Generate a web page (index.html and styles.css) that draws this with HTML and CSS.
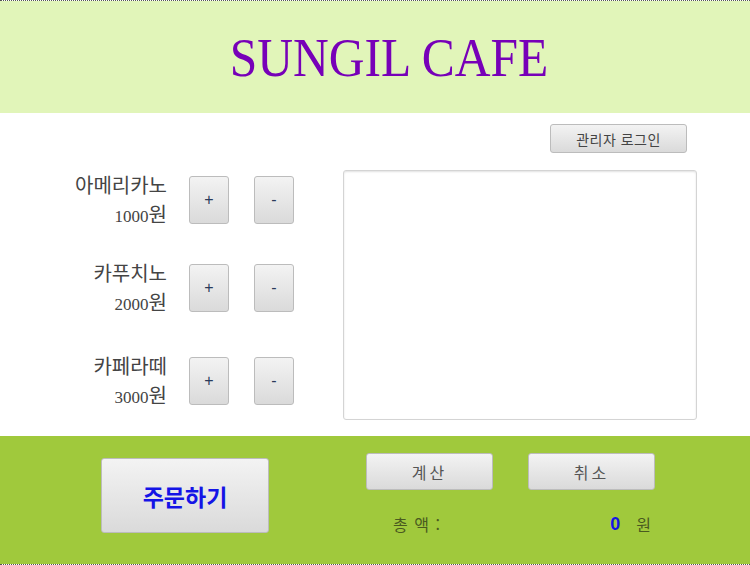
FILE: index.html
```html
<!DOCTYPE html>
<html lang="ko">
<head>
    <meta charset="UTF-8">
    <meta name="viewport" content="width=device-width, initial-scale=1.0">
    <title>Sungil Cafe</title>
    <link rel="stylesheet" href="styles.css">
</head>
<body>
    <div class="app">
        <div class="top">
            <h1 class="title">SUNGIL CAFE</h1>
        </div>

        <div class="middle">
            <div class="admin-row">
                <button class="btn admin">관리자 로그인</button>
            </div>
            <div class="content">
                <div class="menu">
                    <div class="item">
                        <div class="label">
                            <div class="name">아메리카노</div>
                            <div class="price"><span class="num">1000</span>원</div>
                        </div>
                        <button class="btn small plus">+</button>
                        <button class="btn small minus">-</button>
                    </div>
                    <div class="item">
                        <div class="label">
                            <div class="name">카푸치노</div>
                            <div class="price"><span class="num">2000</span>원</div>
                        </div>
                        <button class="btn small plus">+</button>
                        <button class="btn small minus">-</button>
                    </div>
                    <div class="item">
                        <div class="label">
                            <div class="name">카페라떼</div>
                            <div class="price"><span class="num">3000</span>원</div>
                        </div>
                        <button class="btn small plus">+</button>
                        <button class="btn small minus">-</button>
                    </div>
                </div>
                <textarea class="order-list"></textarea>
            </div>
        </div>

        <div class="bottom">
            <button class="btn order">주문하기</button>
            <div class="side">
                <div class="actions">
                    <button class="btn action">계산</button>
                    <button class="btn action">취소</button>
                </div>
                <div class="total">
                    <span class="total-label">총 액 :</span>
                    <span class="total-num">0</span>
                    <span class="total-won">원</span>
                </div>
            </div>
        </div>
    </div>
</body>
</html>
```

FILE: styles.css
```css
body {
    margin: 0;
    font-family: "Noto Sans CJK KR", "Noto Sans", sans-serif;
    color: #444;
}

.app {
    width: 750px;
    height: 565px;
    box-sizing: border-box;
    border-top: 1px dotted #555;
    border-bottom: 1px dotted #555;
    display: flex;
    flex-direction: column;
}

/* header */
.top {
    height: 112px;
    background: #e1f5b9;
    display: flex;
    align-items: center;
    justify-content: center;
    padding-left: 27px;
}

.title {
    margin: 0;
    font-family: "Liberation Serif", serif;
    font-weight: normal;
    font-size: 55px;
    color: #7700b8;
    transform: scaleX(0.9);
}

/* buttons */
.btn {
    font-family: "Noto Sans CJK KR", "Noto Sans", sans-serif;
    background: linear-gradient(#f3f3f3, #dadada);
    border: 1px solid #bcbcbc;
    border-radius: 3px;
    color: #444;
    padding: 0;
    cursor: pointer;
}

/* middle */
.middle {
    height: 323px;
    background: #fff;
}

.admin-row {
    display: flex;
    justify-content: flex-end;
    padding: 11px 63px 0 0;
}

.admin {
    width: 137px;
    height: 29px;
    font-size: 14px;
    letter-spacing: 0.5px;
}

.content {
    display: flex;
    margin-top: 17px;
}

.menu {
    padding-top: 6px;
}

.item {
    display: flex;
    height: 48px;
}

.item + .item {
    margin-top: 40px;
}

.item:last-child {
    margin-top: 45px;
}

.label {
    width: 167px;
    margin-top: -6px;
    text-align: right;
    font-size: 20px;
    line-height: 29px;
    color: #444;
}

.num {
    font-family: "Liberation Serif", serif;
    font-size: 17px;
}

.small {
    width: 40px;
    height: 48px;
    font-family: "Liberation Sans", sans-serif;
    font-size: 16px;
    color: #2a3a5a;
}

.plus {
    margin-left: 22px;
}

.minus {
    margin-left: 25px;
}

.order-list {
    margin-left: 49px;
    width: 354px;
    height: 250px;
    box-sizing: border-box;
    border: 1px solid #d4d4d4;
    border-radius: 3px;
    box-shadow: inset 0 1px 2px rgba(0, 0, 0, 0.12);
    resize: none;
}

/* footer */
.bottom {
    flex: 1;
    background: #a0c93c;
    display: flex;
    padding-left: 101px;
}

.order {
    width: 168px;
    height: 75px;
    margin-top: 22px;
    font-size: 23px;
    font-weight: bold;
    color: #1414e6;
}

.side {
    margin-left: 97px;
    width: 289px;
    padding-top: 17px;
}

.actions {
    display: flex;
    justify-content: space-between;
}

.action {
    width: 127px;
    height: 37px;
    font-size: 16px;
    letter-spacing: 3px;
    color: #555;
}

.total {
    display: flex;
    align-items: center;
    margin-top: 22px;
    font-size: 16px;
    color: #4a5a20;
}

.total-label {
    margin-left: 27px;
    word-spacing: 2px;
}

.total-num {
    margin-left: auto;
    font-family: "Liberation Sans", sans-serif;
    font-weight: bold;
    font-size: 18px;
    color: #1414e6;
}

.total-won {
    margin-left: 16px;
    margin-right: 4px;
}
```
